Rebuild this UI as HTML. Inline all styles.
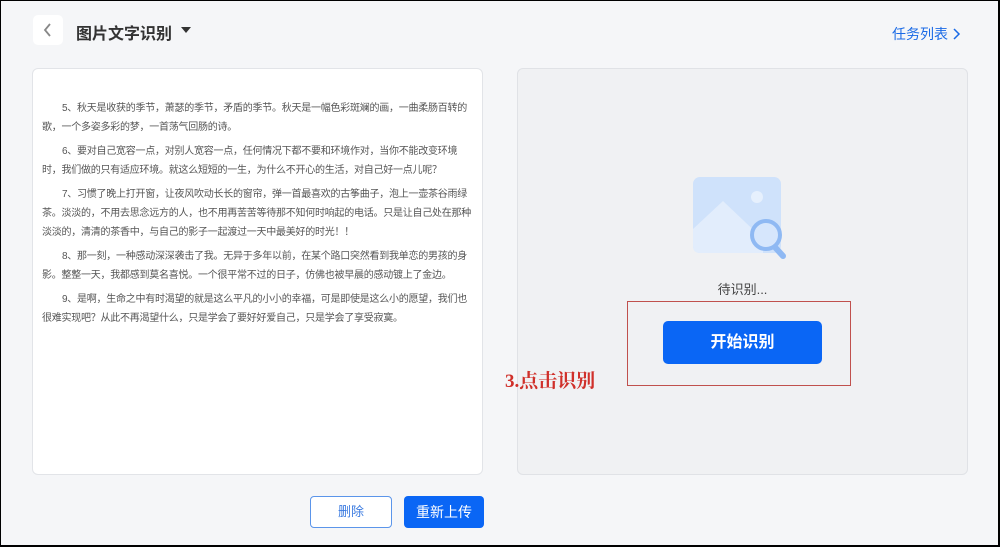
<!DOCTYPE html>
<html><head><meta charset="utf-8"><style>
*{margin:0;padding:0;box-sizing:border-box}
body{width:1000px;height:547px;overflow:hidden;font-family:"Liberation Sans","Noto Sans CJK SC",sans-serif;background:#f5f6f8;position:relative}
.frame{position:absolute;left:0;top:0;width:1000px;height:547px;border:1px solid #000;border-bottom:2px solid #000;border-right:2px solid #000;pointer-events:none;z-index:5}
.back{position:absolute;left:33px;top:15px;width:30px;height:30px;background:#fff;border-radius:5px}
.title{position:absolute;left:76px;top:20px;font-size:16px;font-weight:bold;color:#333}
.tri{position:absolute;left:181px;top:27px;border-left:5px solid transparent;border-right:5px solid transparent;border-top:6px solid #333}
.task{position:absolute;left:892px;top:24px;font-size:14px;color:#1a6ae6}
.lp{position:absolute;left:32px;top:68px;width:451px;height:407px;background:#fff;border:1px solid #e2e4e8;border-radius:6px}
.txt{position:absolute;left:9px;top:30px;width:434px;font-size:10px;line-height:19px;color:#555;letter-spacing:-0.25px}
.txt p{text-indent:20px;margin-bottom:5px}
.rp{position:absolute;left:517px;top:68px;width:451px;height:407px;background:#f0f1f3;border:1px solid #e0e2e6;border-radius:6px}
.wait{position:absolute;left:0;width:100%;top:210px;text-align:center;font-size:13px;color:#444}
.red{position:absolute;left:627px;top:301px;width:224px;height:85px;border:1.5px solid #c0504d}
.go{position:absolute;left:663px;top:321px;width:159px;height:43px;background:#0a66f5;border-radius:5px;color:#fff;font-size:16px;font-weight:bold;text-align:center;line-height:43px}
.step{position:absolute;left:505px;top:366px;font-family:"Liberation Serif","Noto Serif CJK SC",serif;font-weight:bold;font-size:19px;color:#d0302a}
.b1{position:absolute;left:310px;top:496px;width:82px;height:32px;border:1px solid #5b95ea;border-radius:4px;background:#fff;color:#3b7be0;font-size:13px;text-align:center;line-height:30px}
.b2{position:absolute;left:404px;top:496px;width:80px;height:32px;background:#0a66f5;border-radius:4px;color:#fff;font-size:14px;text-align:center;line-height:32px}
</style></head><body>
<div class="back"><svg width="30" height="30"><path d="M17 9 L12 15 L17 21" fill="none" stroke="#888" stroke-width="1.8"/></svg></div>
<div class="title">图片文字识别</div><div class="tri"></div>
<div class="task">任务列表 <svg width="10" height="12" style="vertical-align:-1px"><path d="M2 1 L7 6 L2 11" fill="none" stroke="#1a6ae6" stroke-width="1.5"/></svg></div>
<div class="lp"><div class="txt">
<p>5、秋天是收获的季节，萧瑟的季节，矛盾的季节。秋天是一幅色彩斑斓的画，一曲柔肠百转的歌，一个多姿多彩的梦，一首荡气回肠的诗。</p>
<p>6、要对自己宽容一点，对别人宽容一点，任何情况下都不要和环境作对，当你不能改变环境时，我们做的只有适应环境。就这么短短的一生，为什么不开心的生活，对自己好一点儿呢？</p>
<p>7、习惯了晚上打开窗，让夜风吹动长长的窗帘，弹一首最喜欢的古筝曲子，泡上一壶茶谷雨绿茶。淡淡的，不用去思念远方的人，也不用再苦苦等待那不知何时响起的电话。只是让自己处在那种淡淡的，清清的茶香中，与自己的影子一起渡过一天中最美好的时光！！</p>
<p>8、那一刻，一种感动深深袭击了我。无异于多年以前，在某个路口突然看到我单恋的男孩的身影。整整一天，我都感到莫名喜悦。一个很平常不过的日子，仿佛也被早晨的感动镀上了金边。</p>
<p>9、是啊，生命之中有时渴望的就是这么平凡的小小的幸福，可是即使是这么小的愿望，我们也很难实现吧？从此不再渴望什么，只是学会了要好好爱自己，只是学会了享受寂寞。</p>
</div></div>
<div class="rp">
<svg style="position:absolute;left:175px;top:108px" width="100" height="86">
<rect x="0" y="0" width="88" height="76" rx="7" fill="#cfe2fb"/>
<circle cx="64" cy="20" r="6" fill="#e6f0fd"/>
<path d="M0 52 L30 24 L70 62 L70 76 L7 76 Q0 76 0 69 Z" fill="#e2edfc"/>
<line x1="80" y1="68" x2="90" y2="79" stroke="#8fb9f3" stroke-width="6" stroke-linecap="round"/>
<circle cx="73" cy="58" r="14" fill="#d6e6fc" stroke="#8fb9f3" stroke-width="4"/>
</svg>
<div class="wait">待识别...</div>
</div>
<div class="red"></div>
<div class="go">开始识别</div>
<div class="step">3.点击识别</div>
<div class="b1">删除</div><div class="b2">重新上传</div>
<div class="frame"></div>
</body></html>
